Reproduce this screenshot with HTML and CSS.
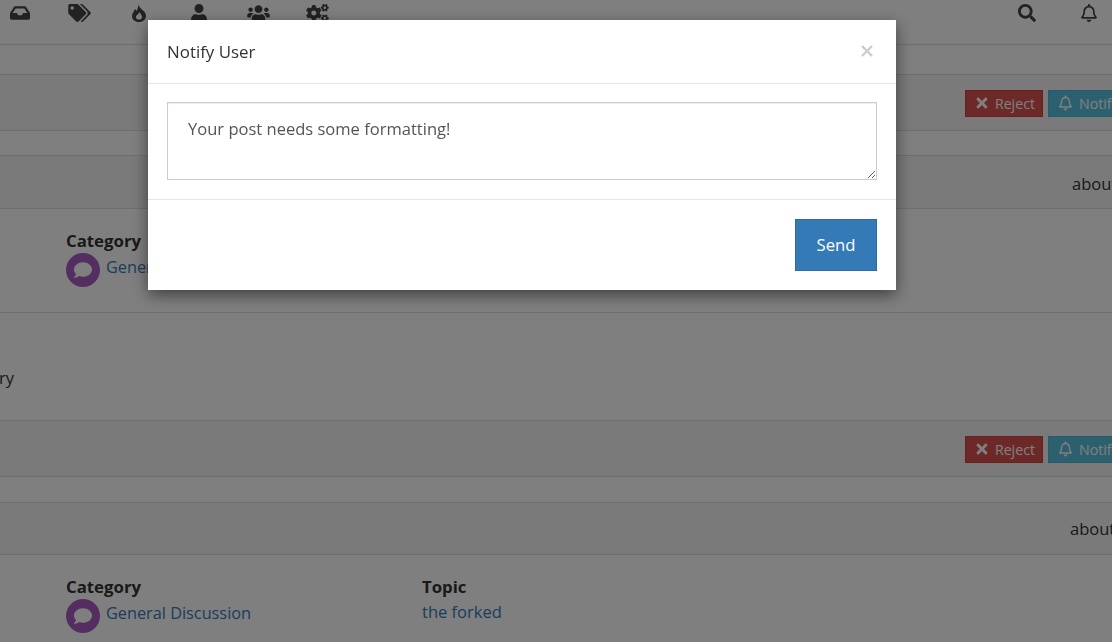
FILE: index.html
```html
<!DOCTYPE html>
<html lang="en">
<head>
<meta charset="utf-8">
<title>Post Queue</title>
<link rel="stylesheet" href="styles.css">
</head>
<body>
<svg class="sprites" aria-hidden="true">
  <symbol id="i-inbox" viewBox="0 0 576 512"><path d="M567.938 243.908L462.25 85.374A48.003 48.003 0 0 0 422.311 64H153.689a48 48 0 0 0-39.938 21.374L8.062 243.908A47.994 47.994 0 0 0 0 270.533V400c0 26.51 21.49 48 48 48h480c26.51 0 48-21.49 48-48V270.533a47.994 47.994 0 0 0-8.062-26.625zM162.252 128h251.497l85.333 128H376l-32 64H232l-32-64H76.918l85.334-128z"/></symbol>
  <symbol id="i-tags" viewBox="0 0 640 512"><path d="M497.941 225.941L286.059 14.059A48 48 0 0 0 252.118 0H48C21.49 0 0 21.49 0 48v204.118a48 48 0 0 0 14.059 33.941l211.882 211.882c18.744 18.745 49.136 18.746 67.882 0l204.118-204.118c18.745-18.745 18.745-49.137 0-67.882zM112 160c-26.51 0-48-21.49-48-48s21.49-48 48-48 48 21.49 48 48-21.49 48-48 48zm513.941 133.823L421.823 497.941c-18.745 18.745-49.137 18.745-67.882 0l-.36-.36L527.64 323.522c16.999-16.999 26.36-39.6 26.36-63.64s-9.362-46.641-26.36-63.64L331.397 0h48.721a48 48 0 0 1 33.941 14.059l211.882 211.882c18.745 18.745 18.745 49.137 0 67.882z"/></symbol>
  <symbol id="i-fire" viewBox="0 0 14 18"><path fill-rule="evenodd" d="M6 0C6.5 3 10 5 12.5 8 13.7 9.5 14 11 14 12 14 15.5 11 18 7 18 3 18 0 15.5 0 12 0 9 2.5 7 3 5 4 6 4.5 6.5 4.8 7 5.5 5 6.5 3 6 0ZM7.6 8C8.2 10 10 11 10 13 10 14.8 8.7 15.6 7 15.6 5.3 15.6 4 14.8 4 13 4 11 6.6 10.5 7.6 8Z"/></symbol>
  <symbol id="i-user" viewBox="0 0 448 512"><path d="M224 256c70.7 0 128-57.3 128-128S294.7 0 224 0 96 57.3 96 128s57.3 128 128 128zm89.6 32h-16.7c-22.2 10.2-46.9 16-72.9 16s-50.6-5.8-72.9-16h-16.7C60.2 288 0 348.2 0 422.4V464c0 26.5 21.5 48 48 48h352c26.5 0 48-21.5 48-48v-41.6c0-74.2-60.2-134.4-134.4-134.4z"/></symbol>
  <symbol id="i-users" viewBox="0 0 640 512"><path d="M96 224c35.3 0 64-28.7 64-64s-28.7-64-64-64-64 28.7-64 64 28.7 64 64 64zm448 0c35.3 0 64-28.7 64-64s-28.7-64-64-64-64 28.7-64 64 28.7 64 64 64zm32 32h-64c-17.6 0-33.5 7.1-45.1 18.6 40.3 22.1 68.9 62 75.1 109.4h66c17.7 0 32-14.3 32-32v-32c0-35.3-28.7-64-64-64zm-256 0c61.9 0 112-50.1 112-112S381.9 32 320 32 208 82.1 208 144s50.1 112 112 112zm76.8 32h-8.3c-20.8 10-43.9 16-68.5 16s-47.6-6-68.5-16h-8.3C179.6 288 128 339.6 128 403.2V432c0 26.5 21.5 48 48 48h288c26.5 0 48-21.5 48-48v-28.8c0-63.6-51.6-115.2-115.2-115.2zm-223.7-13.4C161.5 263.1 145.6 256 128 256H64c-35.3 0-64 28.7-64 64v32c0 17.7 14.3 32 32 32h65.9c6.3-47.4 34.9-87.3 75.2-109.4z"/></symbol>
  <symbol id="i-cogs" viewBox="0 0 640 512"><path d="M512.1 191l-8.2 14.3c-3 5.3-9.4 7.5-15.1 5.4-11.8-4.4-22.6-10.7-32.1-18.6-4.6-3.8-5.8-10.5-2.8-15.7l8.2-14.3c-6.9-8-12.3-17.3-15.9-27.4h-16.5c-6 0-11.2-4.3-12.2-10.3-2-12-2.1-24.6 0-37.1 1-6 6.2-10.4 12.2-10.4h16.5c3.6-10.1 9-19.4 15.9-27.4l-8.2-14.3c-3-5.2-1.9-11.9 2.8-15.7 9.5-7.9 20.4-14.2 32.1-18.6 5.7-2.1 12.1.1 15.1 5.4l8.2 14.3c10.5-1.9 21.2-1.9 31.7 0L552 6.3c3-5.3 9.4-7.5 15.1-5.4 11.8 4.4 22.6 10.7 32.1 18.6 4.6 3.8 5.8 10.5 2.8 15.7l-8.2 14.3c6.9 8 12.3 17.3 15.9 27.4h16.5c6 0 11.2 4.3 12.2 10.3 2 12 2.1 24.6 0 37.1-1 6-6.2 10.4-12.2 10.4h-16.5c-3.6 10.1-9 19.4-15.9 27.4l8.2 14.3c3 5.2 1.9 11.9-2.8 15.7-9.5 7.9-20.4 14.2-32.1 18.6-5.7 2.1-12.1-.1-15.1-5.4l-8.2-14.3c-10.4 1.9-21.2 1.9-31.7 0zm-10.5-58.8c38.5 29.6 82.4-14.3 52.8-52.8-38.5-29.7-82.4 14.3-52.8 52.8zM386.3 286.1l33.7 16.8c10.1 5.8 14.5 18.1 10.5 29.1-8.9 24.2-26.4 46.4-42.6 65.8-7.4 8.9-20.2 11.1-30.3 5.3l-29.1-16.8c-16 13.7-34.6 24.6-54.9 31.7v33.6c0 11.6-8.3 21.6-19.7 23.6-24.6 4.2-50.4 4.4-75.9 0-11.5-2-20-11.9-20-23.6V418c-20.3-7.2-38.9-18-54.9-31.7L74 403c-10 5.8-22.9 3.6-30.3-5.3-16.2-19.4-33.3-41.6-42.2-65.7-4-10.9.4-23.2 10.5-29.1l33.3-16.8c-3.9-20.9-3.9-42.4 0-63.4L12 205.8c-10.1-5.8-14.6-18.1-10.5-29 8.9-24.2 26-46.4 42.2-65.8 7.4-8.9 20.2-11.1 30.3-5.3l29.1 16.8c16-13.7 34.6-24.6 54.9-31.7V57.1c0-11.5 8.2-21.5 19.6-23.5 24.6-4.2 50.5-4.4 76-.1 11.5 2 20 11.9 20 23.6v33.6c20.3 7.2 38.9 18 54.9 31.7l29.1-16.8c10-5.8 22.9-3.6 30.3 5.3 16.2 19.4 33.2 41.6 42.1 65.8 4 10.9.1 23.2-10 29.1l-33.7 16.8c3.9 21 3.9 42.5 0 63.5zm-117.6 21.1c59.2-77-28.7-164.9-105.7-105.7-59.2 77 28.7 164.9 105.7 105.7zm243.4 182.7l-8.2 14.3c-3 5.3-9.4 7.5-15.1 5.4-11.8-4.4-22.6-10.7-32.1-18.6-4.6-3.8-5.8-10.5-2.8-15.7l8.2-14.3c-6.9-8-12.3-17.3-15.9-27.4h-16.5c-6 0-11.2-4.3-12.2-10.3-2-12-2.1-24.6 0-37.1 1-6 6.2-10.4 12.2-10.4h16.5c3.6-10.1 9-19.4 15.9-27.4l-8.2-14.3c-3-5.2-1.9-11.9 2.8-15.7 9.5-7.9 20.4-14.2 32.1-18.6 5.7-2.1 12.1.1 15.1 5.4l8.2 14.3c10.5-1.9 21.2-1.9 31.7 0l8.2-14.3c3-5.3 9.4-7.5 15.1-5.4 11.8 4.4 22.6 10.7 32.1 18.6 4.6 3.8 5.8 10.5 2.8 15.7l-8.2 14.3c6.9 8 12.3 17.3 15.9 27.4h16.5c6 0 11.2 4.3 12.2 10.3 2 12 2.1 24.6 0 37.1-1 6-6.2 10.4-12.2 10.4h-16.5c-3.6 10.1-9 19.4-15.9 27.4l8.2 14.3c3 5.2 1.9 11.9-2.8 15.7-9.5 7.9-20.4 14.2-32.1 18.6-5.7 2.1-12.1-.1-15.1-5.4l-8.2-14.3c-10.4 1.9-21.2 1.9-31.7 0zM501.6 431c38.5 29.6 82.4-14.3 52.8-52.8-38.5-29.6-82.4 14.3-52.8 52.8z"/></symbol>
  <symbol id="i-search" viewBox="0 0 512 512"><path d="M505 442.7L405.3 343c-4.5-4.5-10.6-7-17-7H372c27.6-35.3 44-79.7 44-128C416 93.1 322.9 0 208 0S0 93.1 0 208s93.1 208 208 208c48.3 0 92.7-16.4 128-44v16.3c0 6.4 2.5 12.5 7 17l99.7 99.7c9.4 9.4 24.6 9.4 33.9 0l28.3-28.3c9.4-9.4 9.4-24.6.1-34zM208 336c-70.7 0-128-57.2-128-128 0-70.7 57.2-128 128-128 70.7 0 128 57.2 128 128 0 70.7-57.2 128-128 128z"/></symbol>
  <symbol id="i-bell" viewBox="0 0 448 512"><path d="M439.39 362.29c-19.32-20.76-55.47-51.99-55.47-154.29 0-77.7-54.48-139.9-127.94-155.16V32c0-17.67-14.32-32-31.98-32s-31.98 14.33-31.98 32v20.84C118.56 68.1 64.08 130.3 64.08 208c0 102.3-36.15 133.53-55.47 154.29-6 6.45-8.66 14.16-8.61 21.71.11 16.4 12.98 32 32.1 32h383.8c19.12 0 32-15.6 32.1-32 .05-7.55-2.61-15.27-8.61-21.71zM67.53 368c21.22-27.97 44.42-74.33 44.53-159.42 0-.2-.06-.38-.06-.58 0-61.86 50.14-112 112-112s112 50.14 112 112c0 .2-.06.38-.06.58.11 85.1 23.31 131.46 44.53 159.42H67.53zM224 512c35.32 0 63.97-28.65 63.97-64H160.03c0 35.35 28.65 64 63.97 64z"/></symbol>
  <symbol id="i-times" viewBox="0 0 352 512"><path d="M242.72 256l100.07-100.07c12.28-12.28 12.28-32.19 0-44.48l-22.24-22.24c-12.28-12.28-32.19-12.28-44.48 0L176 189.28 75.93 89.21c-12.28-12.28-32.19-12.28-44.48 0L9.21 111.45c-12.28 12.28-12.28 32.19 0 44.48L109.28 256 9.21 356.07c-12.28 12.28-12.28 32.19 0 44.48l22.24 22.24c12.28 12.28 32.2 12.28 44.48 0L176 322.72l100.07 100.07c12.28 12.28 32.2 12.28 44.48 0l22.24-22.24c12.28-12.28 12.28-32.19 0-44.48L242.72 256z"/></symbol>
  <symbol id="i-comment" viewBox="0 0 512 512"><path d="M256 32C114.6 32 0 125.1 0 240c0 49.6 21.4 95 57 130.7C44.5 421.1 2.7 466 2.2 466.5c-2.2 2.3-2.8 5.7-1.5 8.7S4.8 480 8 480c66.3 0 116-31.8 140.6-51.4 32.7 12.3 69 19.4 107.4 19.4 141.4 0 256-93.1 256-208S397.4 32 256 32z"/></symbol>
</svg>

<div class="page">
  <nav class="nav">
    <ul class="nav-list">
      <li class="nav-item"><svg class="nav-icon w-inbox"><use href="#i-inbox"/></svg></li>
      <li class="nav-item"><svg class="nav-icon w-wide"><use href="#i-tags"/></svg></li>
      <li class="nav-item"><svg class="nav-icon w-fire"><use href="#i-fire"/></svg></li>
      <li class="nav-item"><svg class="nav-icon w-narrow"><use href="#i-user"/></svg></li>
      <li class="nav-item"><svg class="nav-icon w-wide"><use href="#i-users"/></svg></li>
      <li class="nav-item"><svg class="nav-icon w-wide"><use href="#i-cogs"/></svg></li>
    </ul>
    <ul class="nav-list">
      <li class="nav-item"><svg class="nav-icon w-square"><use href="#i-search"/></svg></li>
      <li class="nav-item"><svg class="nav-icon w-narrow"><use href="#i-bell"/></svg></li>
    </ul>
  </nav>

  <div class="row row-blank row-first"></div>
  <div class="row row-head row-actions">
    <button class="btn btn-danger"><svg class="btn-icon w-x"><use href="#i-times"/></svg>Reject</button>
    <button class="btn btn-info"><svg class="btn-icon w-b"><use href="#i-bell"/></svg>Notify</button>
  </div>
  <div class="row row-blank"></div>
  <div class="row row-head row-meta row-meta-a"><span>about an hour ago</span></div>
  <div class="row row-body">
    <div class="field">
      <div class="field-label">Category</div>
      <a class="cat"><span class="cat-badge"><svg class="cat-icon"><use href="#i-comment"/></svg></span><span class="link cat-name">General Discussion</span></a>
    </div>
    <div class="field">
      <div class="field-label">Topic</div>
      <a class="link topic">the forked</a>
    </div>
  </div>
  <div class="row row-content"><span class="clipped">Summary</span></div>

  <div class="row row-head row-actions">
    <button class="btn btn-danger"><svg class="btn-icon w-x"><use href="#i-times"/></svg>Reject</button>
    <button class="btn btn-info"><svg class="btn-icon w-b"><use href="#i-bell"/></svg>Notify</button>
  </div>
  <div class="row row-blank row-blank-tall"></div>
  <div class="row row-head row-meta row-meta-b"><span>about an hour ago</span></div>
  <div class="row row-body">
    <div class="field">
      <div class="field-label">Category</div>
      <a class="cat"><span class="cat-badge"><svg class="cat-icon"><use href="#i-comment"/></svg></span><span class="link cat-name">General Discussion</span></a>
    </div>
    <div class="field">
      <div class="field-label">Topic</div>
      <a class="link topic">the forked</a>
    </div>
  </div>
</div>

<div class="backdrop"></div>
<div class="modal">
  <header class="modal-header">
    <h4 class="modal-title">Notify User</h4>
    <svg class="modal-close" viewBox="0 0 12 12"><path d="M1 1l10 10M11 1L1 11"/></svg>
  </header>
  <div class="modal-body">
    <textarea class="message">Your post needs some formatting!</textarea>
  </div>
  <footer class="modal-footer">
    <button class="btn-send">Send</button>
  </footer>
</div>
</body>
</html>
```

FILE: styles.css
```css
* { box-sizing: border-box; }
html, body { margin: 0; height: 100%; }
body {
  overflow: hidden;
  background: #fff;
  color: #333;
  font-family: "Open Sans", "Noto Sans", sans-serif;
  font-size: 16.5px;
}
.sprites { display: none; }
.page { height: 642px; overflow: hidden; }

.nav {
  display: flex;
  justify-content: space-between;
  height: 45px;
  margin: 0 -8px 0 -10px;
  border-bottom: 1px solid #ddd;
}
.nav-list { display: flex; margin: 0; padding: 0; list-style: none; }
.nav-item {
  display: flex;
  justify-content: center;
  width: 59.6px;
  padding-top: 4px;
}
.nav-list + .nav-list .nav-item { width: 62px; }
.nav-icon { height: 18px; fill: #444; }
.w-inbox { width: 20px; }
.w-wide { width: 23px; }
.w-narrow { width: 16px; }
.w-fire { width: 14px; }
.w-square { width: 18px; }

.row { border-bottom: 1px solid #ddd; overflow: hidden; white-space: nowrap; }
.row-blank { height: 25px; }
.row-first.row-blank { height: 30px; }
.row-blank-tall.row-blank { height: 26px; }
.row-head { background: #f5f5f5; }
.row-actions {
  display: flex;
  align-items: flex-start;
  gap: 5px;
  height: 56px;
  padding: 15px 0 0 965px;
}
.row-meta { height: 53px; padding-top: 16px; font-size: 16.5px; }
.row-meta-a { padding-left: 1072px; }
.row-meta-b { height: 52px; padding-top: 14px; padding-left: 1070px; }

.btn {
  display: flex;
  flex: none;
  align-items: center;
  height: 27px;
  padding: 0 7px 1px 10px;
  border: 1px solid transparent;
  color: #fff;
  font: inherit;
  font-size: 14.2px;
}
.btn-danger { width: 78px; background: #d9534f; border-color: #d43f3a; }
.btn-info { background: #5bc0de; border-color: #46b8da; }
.btn-icon { height: 16px; margin-right: 7px; fill: currentColor; }
.w-x { width: 12px; }
.w-b { width: 13px; }

.row-body {
  display: grid;
  grid-template-columns: 356px 1fr;
  height: 104px;
  padding: 21px 0 0 66px;
}
.field-label { font-size: 16.8px; font-weight: 700; line-height: 21px; color: #333; }
.cat { display: flex; align-items: center; gap: 6px; margin-top: 2px; }
.cat-badge {
  display: flex;
  align-items: center;
  justify-content: center;
  width: 34px;
  height: 34px;
  border-radius: 50%;
  background: #a85cc0;
}
.cat-icon { width: 18px; height: 18px; fill: #fff; }
.link { color: #337ab7; }
.cat-name { margin-bottom: 6px; font-size: 16.3px; }
.topic { display: block; margin-top: 3px; }

.row-content { height: 108px; padding-top: 53px; }
.clipped { display: block; margin-left: -60px; }

.backdrop { position: fixed; inset: 0; background: rgba(0, 0, 0, .5); }
.modal {
  position: fixed;
  top: 20px;
  left: 148px;
  width: 748px;
  background: #fff;
  box-shadow: 0 5px 15px rgba(0, 0, 0, .5);
}
.modal-header {
  display: flex;
  align-items: center;
  justify-content: space-between;
  height: 64px;
  padding: 0 23px 0 19px;
  border-bottom: 1px solid #e5e5e5;
}
.modal-title { margin: 0; font-size: 16.9px; font-weight: 500; color: #333; }
.modal-close { width: 12px; height: 12px; margin-top: -2px; fill: none; stroke: #ccc; stroke-width: 2.4; }
.modal-body { padding: 18px 19px 19px; border-bottom: 1px solid #e5e5e5; }
.message {
  display: block;
  width: 100%;
  height: 78px;
  padding: 13px 20px;
  border: 1px solid #ccc;
  border-radius: 0;
  outline: 0;
  color: #555;
  font: inherit;
  font-size: 16.55px;
  line-height: 26px;
  box-shadow: inset 0 1px 1px rgba(0, 0, 0, .075);
}
.modal-footer { display: flex; justify-content: flex-end; padding: 19px; }
.btn-send {
  width: 82px;
  height: 52px;
  padding: 0 0 2px;
  border: 1px solid #2e6da4;
  background: #337ab7;
  color: #fff;
  font: inherit;
  font-size: 16.7px;
}
```
